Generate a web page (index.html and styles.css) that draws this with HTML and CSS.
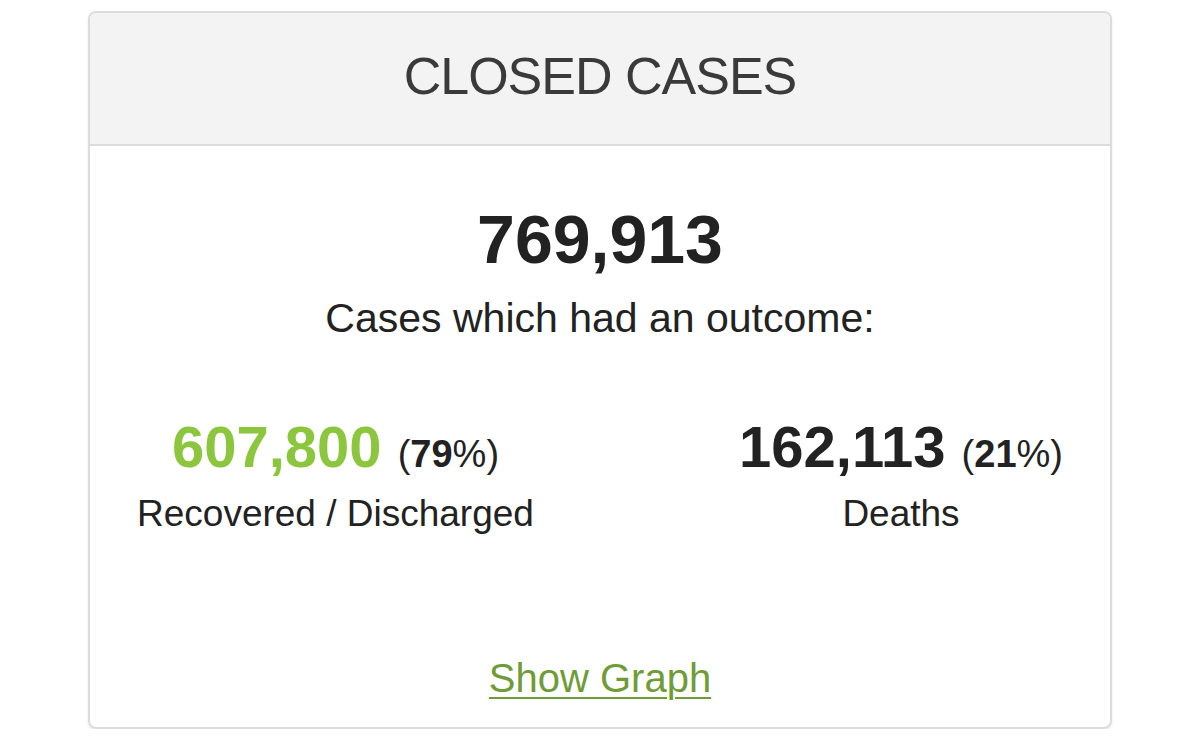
FILE: index.html
```html
<!DOCTYPE html>
<html lang="en">
<head>
    <meta charset="UTF-8">
    <meta name="viewport" content="width=device-width, initial-scale=1.0">
    <title>Closed Cases</title>
    <link rel="stylesheet" href="styles.css">
</head>
<body>

<div class="panel">
    <div class="panel-heading">
        <h3>CLOSED CASES</h3>
    </div>
    <div class="panel-body">
        <div class="total">769,913</div>
        <div class="subtitle">Cases which had an outcome:</div>
        <div class="split">
            <div class="split-col">
                <div class="figure"><span class="recovered">607,800</span> <span class="pct">(<strong>79</strong>%)</span></div>
                <div class="label">Recovered / Discharged</div>
            </div>
            <div class="split-col">
                <div class="figure"><span>162,113</span> <span class="pct">(<strong>21</strong>%)</span></div>
                <div class="label">Deaths</div>
            </div>
        </div>
        <div class="graph"><a href="#">Show Graph</a></div>
    </div>
</div>

</body>
</html>
```

FILE: styles.css
```css
body {
    margin: 0;
    background-color: #ffffff;
    font-family: "Liberation Sans", Arial, sans-serif;
    color: #222;
}
.panel {
    width: 1024px;
    box-sizing: border-box;
    margin: 11px 0 0 88px;
    border: 2px solid #dcdcdc;
    border-radius: 8px;
    box-shadow: 0px 2px 3px rgba(0, 0, 0, 0.08);
    overflow: hidden;
}
.panel-heading {
    background-color: #f3f3f3;
    border-bottom: 2px solid #dcdcdc;
    text-align: center;
}
.panel-heading h3 {
    margin: 0;
    height: 126px;
    padding-bottom: 5px;
    line-height: 126px;
    font-size: 52px;
    font-weight: normal;
    letter-spacing: -1px;
    color: #3a3a3a;
}
.panel-body {
    padding: 53px 47px 25px;
    text-align: center;
}
.total {
    font-size: 68px;
    line-height: 80px;
    font-weight: bold;
}
.subtitle {
    margin-top: 14px;
    font-size: 41px;
    line-height: 50px;
}
.split {
    display: flex;
    justify-content: space-between;
    margin-top: 71px;
}
.figure {
    font-size: 58px;
    line-height: 66px;
    font-weight: bold;
}
.recovered {
    color: #8cc63f;
}
.pct {
    font-size: 38px;
    font-weight: normal;
}
.label {
    margin-top: 5px;
    font-size: 37px;
    line-height: 44px;
}
.graph {
    margin-top: 118px;
    font-size: 40px;
    line-height: 48px;
}
.graph a {
    color: #6f9c37;
    text-decoration: underline;
    text-decoration-thickness: 2px;
    text-underline-offset: 5px;
}
```
